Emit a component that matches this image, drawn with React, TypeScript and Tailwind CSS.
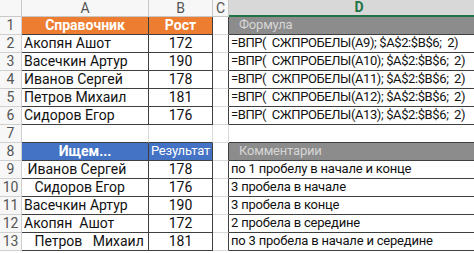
const DARK = "#3f3f3f";

type Cell = {
  text?: string;
  kind?: "orange" | "blue" | "gray" | "plain";
  align?: "left" | "center";
  bold?: boolean;
  small?: boolean;
  tight?: boolean;
};

const names1 = [
  ["Акопян Ашот", "172"],
  ["Васечкин Артур", "190"],
  ["Иванов Сергей", "178"],
  ["Петров Михаил", "181"],
  ["Сидоров Егор", "176"],
];

const lookups = [
  [" Иванов Сергей ", "178", "по 1 пробелу в начале и конце"],
  ["   Сидоров Егор", "176", "3 пробела в начале"],
  ["Васечкин Артур   ", "190", "3 пробела в конце"],
  ["Акопян  Ашот", "172", "2 пробела в середине"],
  ["   Петров   Михаил", "181", "по 3 пробела в начале и середине"],
];

// rows 1..13, columns A B C D
const grid: (Cell | null)[][] = [
  [
    { text: "Справочник", kind: "orange", align: "center", bold: true },
    { text: "Рост", kind: "orange", align: "center", bold: true },
    null,
    { text: "Формула", kind: "gray", small: true },
  ],
  ...names1.map(([n, h], i) => [
    { text: n, kind: "plain" as const },
    { text: h, kind: "plain" as const, align: "center" as const },
    null,
    {
      text: `=ВПР(  СЖПРОБЕЛЫ(A${9 + i}); $A$2:$B$6;  2)`,
      kind: "plain" as const,
      small: true,
      tight: true,
    },
  ]),
  [null, null, null, null],
  [
    { text: "Ищем...", kind: "blue", align: "center", bold: true },
    { text: "Результат", kind: "blue", align: "center", small: true },
    null,
    { text: "Комментарии", kind: "gray", small: true },
  ],
  ...lookups.map(([n, h, c]) => [
    { text: n, kind: "plain" as const },
    { text: h, kind: "plain" as const, align: "center" as const },
    null,
    { text: c, kind: "plain" as const, small: true },
  ]),
];

const inTable = (r: number, c: number) => r >= 0 && r < 13 && c >= 0 && c < 4 && !!grid[r][c];

function DataCell({ cell, r, c }: { cell: Cell | null; r: number; c: number }) {
  const darkRight = inTable(r, c) || inTable(r, c + 1);
  const darkBottom = inTable(r, c) || inTable(r + 1, c);
  const bg =
    cell?.kind === "orange"
      ? "bg-[#ed7d31] text-white"
      : cell?.kind === "blue"
      ? "bg-[#4472c4] text-white"
      : cell?.kind === "gray"
      ? "bg-[#8c8c8c] text-[#d6d6d6] pl-[10px]"
      : "bg-white text-[#111]";
  const size = cell?.tight
    ? "text-[13px] tracking-[-0.4px]"
    : cell?.small
    ? "text-[13px] tracking-[-0.2px]"
    : "text-[14px]";
  return (
    <div
      className={`h-[18px] border-r border-b flex items-end pb-[1px] overflow-hidden whitespace-pre leading-[16px] ${bg} ${size} ${
        darkRight ? "border-r-[#3f3f3f]" : "border-r-[#d9d9d9]"
      } ${darkBottom ? "border-b-[#3f3f3f]" : "border-b-[#d9d9d9]"} ${
        cell?.align === "center" ? "justify-center" : "justify-start pl-[2px]"
      } ${cell?.bold ? "font-bold" : ""}`}
    >
      {cell?.text}
    </div>
  );
}

export default function App() {
  const cols = ["A", "B", "C", "D"];
  return (
    <div
      className="w-[474px] h-[253px] overflow-hidden bg-white"
      style={{ fontFamily: "Roboto, 'Noto Sans', sans-serif", color: DARK }}
    >
      <div className="grid grid-cols-[22px_127px_64px_16px_260px]">
        {/* column headers */}
        <div className="h-[17px] bg-[#f7f7f7] border-r border-b border-[#c8c8c8]" />
        {cols.map((c) =>
          c === "D" ? (
            <div
              key={c}
              className="h-[17px] bg-[#d8d8d8] border-b-2 border-b-[#217346] flex items-center justify-center text-[14px] font-bold text-[#217346]"
            >
              {c}
            </div>
          ) : (
            <div
              key={c}
              className="h-[17px] bg-[#f7f7f7] border-r border-b border-[#c8c8c8] flex items-center justify-center text-[14px] text-[#555]"
            >
              {c}
            </div>
          )
        )}
        {grid.map((row, r) => (
          <div key={r} className="contents">
            <div className="h-[18px] bg-[#f7f7f7] border-r border-b border-[#d0d0d0] flex items-center justify-center text-[14px] text-[#555]">
              {r + 1}
            </div>
            {row.map((cell, c) => (
              <DataCell key={c} cell={cell} r={r} c={c} />
            ))}
          </div>
        ))}
      </div>
    </div>
  );
}
